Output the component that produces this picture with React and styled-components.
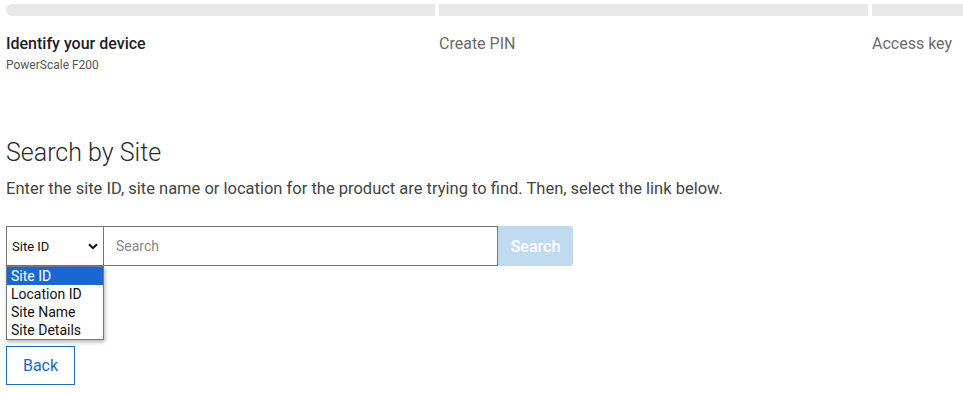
import React from "react";
import styled, { createGlobalStyle } from "styled-components";

const Global = createGlobalStyle`
  html, body {
    margin: 0;
    overflow: hidden;
    background: #fff;
    font-family: Roboto, "Liberation Sans", Arial, sans-serif;
  }
`;

const Page = styled.div`
  padding: 4px 6px;
`;

const Steps = styled.div`
  display: flex;
  gap: 4px;
  width: 1400px;
`;

const Step = styled.div`
  width: 429px;
  flex: none;
`;

const Bar = styled.div`
  height: 12px;
  background: #e8e8e8;
  border-radius: ${p => (p.first ? "6px 0 0 6px" : "0")};
`;

const StepTitle = styled.div`
  margin-top: 18px;
  font-size: 16px;
  line-height: 20px;
  font-weight: ${p => (p.active ? 500 : 400)};
  color: ${p => (p.active ? "#1e1e1e" : "#6b6b6b")};
`;

const StepSub = styled.div`
  margin-top: 4px;
  font-size: 12px;
  line-height: 15px;
  color: #555;
`;

const Heading = styled.h2`
  margin: 65px 0 0;
  font-size: 25px;
  line-height: 30px;
  font-weight: 300;
  color: #2b2b2b;
`;

const Lead = styled.p`
  margin: 11px 0 0;
  font-size: 16.5px;
  line-height: 20px;
  color: #444;
`;

const SearchRow = styled.div`
  position: relative;
  display: flex;
  margin-top: 27px;
  height: 40px;
`;

const SelectBox = styled.div`
  width: 98px;
  box-sizing: border-box;
  border: 1px solid #767676;
  display: flex;
  align-items: center;
  justify-content: space-between;
  padding: 0 5px 0 5px;
  font-size: 13px;
  color: #111;
`;

const Input = styled.div`
  width: 394px;
  box-sizing: border-box;
  border: 1px solid #767676;
  border-left: none;
  display: flex;
  align-items: center;
  padding-left: 12px;
  font-size: 14px;
  color: #8a8a8a;
`;

const SearchButton = styled.button`
  width: 75px;
  border: none;
  border-radius: 0 3px 3px 0;
  background: #c0daf0;
  color: #fff;
  font-family: inherit;
  font-size: 16px;
  font-weight: 500;
`;

const List = styled.ul`
  position: absolute;
  left: 0;
  top: 40px;
  width: 96px;
  margin: 0;
  padding: 0;
  list-style: none;
  background: #fff;
  border: 1px solid #777;
  box-shadow: 1px 2px 4px rgba(0, 0, 0, 0.3);
`;

const Option = styled.li`
  height: 18px;
  line-height: 18px;
  padding-left: 4px;
  font-size: 14px;
  background: ${p => (p.selected ? "#1967d2" : "#fff")};
  color: ${p => (p.selected ? "#fff" : "#111")};
`;

const BackButton = styled.button`
  margin-top: 80px;
  width: 69px;
  height: 39px;
  background: #fff;
  border: 1px solid #1a6bc4;
  color: #1a6bc4;
  font-family: inherit;
  font-size: 16px;
`;

const Chevron = () => (
  <svg width="10" height="7" viewBox="0 0 10 7">
    <path d="M1 1.2 L5 5.2 L9 1.2" fill="none" stroke="#111" strokeWidth="2" />
  </svg>
);

const steps = [
  { title: "Identify your device", sub: "PowerScale F200", active: true },
  { title: "Create PIN" },
  { title: "Access key" },
];

const options = ["Site ID", "Location ID", "Site Name", "Site Details"];

export default function App() {
  return (
    <>
      <Global />
      <Page>
        <Steps>
          {steps.map((s, i) => (
            <Step key={s.title}>
              <Bar first={i === 0} />
              <StepTitle active={s.active}>{s.title}</StepTitle>
              {s.sub && <StepSub>{s.sub}</StepSub>}
            </Step>
          ))}
        </Steps>
        <Heading>Search by Site</Heading>
        <Lead>
          Enter the site ID, site name or location for the product are trying to find. Then, select the link below.
        </Lead>
        <SearchRow>
          <SelectBox>
            Site ID
            <Chevron />
          </SelectBox>
          <Input>Search</Input>
          <SearchButton>Search</SearchButton>
          <List>
            {options.map((o, i) => (
              <Option key={o} selected={i === 0}>
                {o}
              </Option>
            ))}
          </List>
        </SearchRow>
        <BackButton>Back</BackButton>
      </Page>
    </>
  );
}
